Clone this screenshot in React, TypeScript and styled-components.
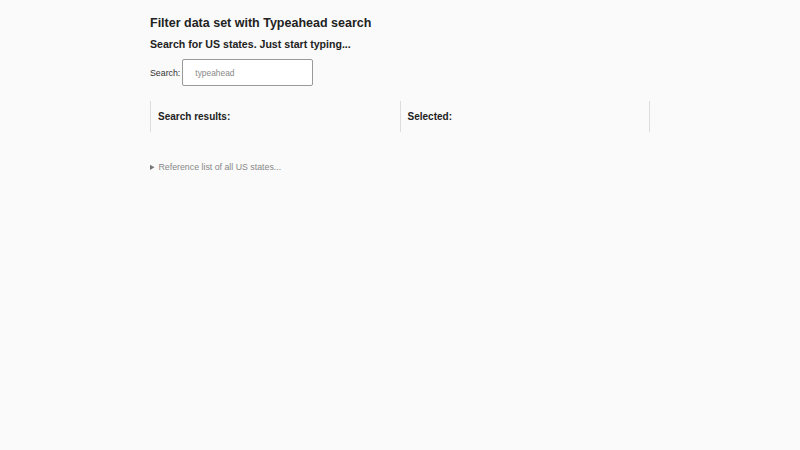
import styled, { createGlobalStyle } from "styled-components";

const GlobalStyle = createGlobalStyle`
  html, body {
    margin: 0;
    padding: 0;
    background: #fafafa;
    font-family: "Liberation Sans", Arial, sans-serif;
    color: #222;
  }
`;

const Page = styled.main`
  width: 500px;
  margin: 0 auto;
  padding-top: 16px;
`;

const Title = styled.h1`
  margin: 0 0 7px;
  font-size: 12.5px;
  font-weight: bold;
  line-height: 15px;
`;

const Subtitle = styled.h2`
  margin: 0 0 8px;
  font-size: 10.6px;
  font-weight: bold;
  line-height: 13px;
`;

const SearchRow = styled.label`
  display: flex;
  align-items: center;
  gap: 2px;
  font-size: 8.8px;
  color: #333;
`;

const SearchInput = styled.input`
  width: 131px;
  height: 27px;
  box-sizing: border-box;
  padding: 0 12px;
  border: 1px solid #999;
  border-radius: 2px;
  background: #fff;
  font-family: "Liberation Sans", Arial, sans-serif;
  font-size: 8.4px;
  color: #333;
  &::placeholder {
    color: #888;
  }
`;

const Columns = styled.div`
  display: grid;
  grid-template-columns: 1fr 1fr;
  margin-top: 15px;
  border-right: 1px solid #ddd;
`;

const Column = styled.section`
  border-left: 1px solid #ddd;
  padding: 10px 7px 9px;
`;

const ColumnTitle = styled.h3`
  margin: 0;
  font-size: 10px;
  font-weight: bold;
  line-height: 12px;
`;

const Details = styled.details`
  margin-top: 30px;
  font-size: 8.8px;
  line-height: 11px;
  color: #888;
`;

const Summary = styled.summary`
  cursor: pointer;
  &::marker {
    font-size: 8px;
    color: #777;
  }
`;

const App: React.FC = () => {
  return (
    <>
      <GlobalStyle />
      <Page>
        <Title>Filter data set with Typeahead search</Title>
        <Subtitle>Search for US states. Just start typing...</Subtitle>
        <SearchRow>
          Search:
          <SearchInput type="text" placeholder="typeahead" />
        </SearchRow>
        <Columns>
          <Column>
            <ColumnTitle>Search results:</ColumnTitle>
          </Column>
          <Column>
            <ColumnTitle>Selected:</ColumnTitle>
          </Column>
        </Columns>
        <Details>
          <Summary>Reference list of all US states...</Summary>
        </Details>
      </Page>
    </>
  );
};

export default App;
